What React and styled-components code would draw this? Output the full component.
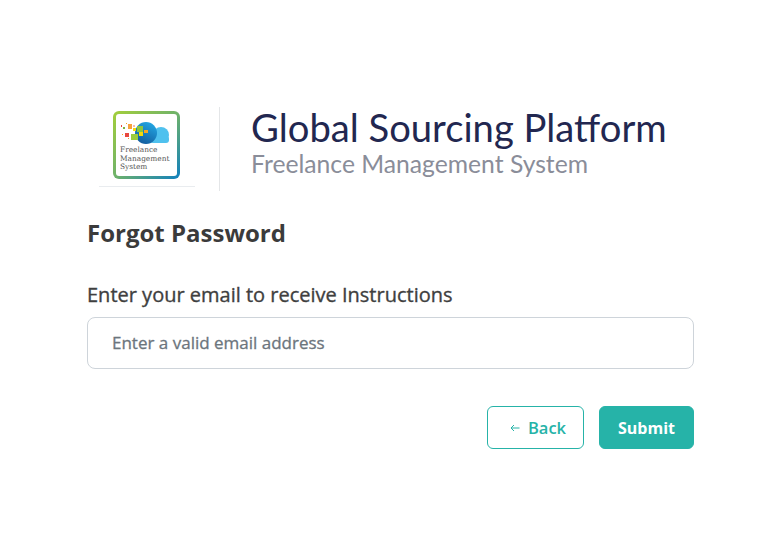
import React from "react";
import styled, { createGlobalStyle } from "styled-components";

const Global = createGlobalStyle`
  html, body { margin: 0; padding: 0; background: #fff; }
  body { font-family: "Open Sans", "Liberation Sans", sans-serif; }
`;
const Page = styled.main`
  width: 607px;
  margin-left: 87px;
  padding-top: 107px;
  box-sizing: border-box;
`;
const Header = styled.header`
  display: flex;
  align-items: flex-start;
  height: 85px;
`;
const LogoCell = styled.div`
  width: 133px;
  height: 84px;
  box-sizing: border-box;
  border-right: 1px solid #e4e6e8;
  padding-left: 12px;
`;
const LogoFrame = styled.div`
  width: 96px;
  height: 80px;
  box-sizing: border-box;
  border-bottom: 1px solid #e9ecef;
  padding: 4px 0 0 14px;
`;
const LogoBadge = styled.div`
  width: 67px;
  height: 68px;
  box-sizing: border-box;
  border-radius: 6px;
  border: 3px solid transparent;
  background: linear-gradient(#fff, #fff) padding-box,
    linear-gradient(135deg, #a4cf3a 0%, #6fb26a 50%, #0f7fc0 100%) border-box;
  display: flex;
  flex-direction: column;
  padding: 6px 0 0 4px;
`;
const LogoArt = styled.svg`
  display: block;
  flex: none;
  width: 52px;
  height: 26px;
`;
const LogoText = styled.div`
  font-family: "DejaVu Serif", serif;
  font-size: 7.4px;
  line-height: 8.5px;
  color: #555;
  white-space: nowrap;
`;
const Titles = styled.div`
  padding: 0 0 0 31px;
`;
const Title = styled.h1`
  margin: 0;
  font-family: "Lato", "Noto Sans", sans-serif;
  font-weight: 400;
  font-size: 38.2px;
  line-height: 41px;
  color: #222750;
  white-space: nowrap;
`;
const Subtitle = styled.h2`
  margin: 1px 0 0;
  font-family: "Lato", "Noto Sans", sans-serif;
  font-weight: 400;
  font-size: 24.7px;
  line-height: 30px;
  color: #8a8d99;
  white-space: nowrap;
`;
const Heading = styled.h3`
  margin: 23px 0 0;
  font-size: 24px;
  line-height: 36px;
  font-weight: 700;
  color: #3b3b3b;
`;
const Form = styled.form`
  margin-top: 31px;
  display: flex;
  flex-direction: column;
`;
const Label = styled.label`
  font-size: 20px;
  line-height: 26px;
  font-weight: 400;
  -webkit-text-stroke: 0.35px #3f3f3f;
  color: #3f3f3f;
  white-space: nowrap;
`;
const Input = styled.input`
  margin-top: 9px;
  height: 52px;
  box-sizing: border-box;
  border: 1px solid #ced4da;
  border-radius: 8px;
  padding: 0 24px 2px;
  font-family: inherit;
  font-size: 17px;
  font-weight: 400;
  outline: none;
  &::placeholder {
    color: #6c757d;
    opacity: 1;
    -webkit-text-stroke: 0.3px #6c757d;
  }
`;
const Actions = styled.div`
  display: flex;
  justify-content: flex-end;
  gap: 15px;
  margin-top: 37px;
`;
const Button = styled.button`
  height: 43px;
  box-sizing: border-box;
  border-radius: 6px;
  border: 1px solid #26b3a8;
  background: ${(p) => (p.$primary ? "#26b3a8" : "#fff")};
  color: ${(p) => (p.$primary ? "#fff" : "#26b3a8")};
  width: ${(p) => p.$w}px;
  font-family: inherit;
  font-size: ${(p) => (p.$primary ? 16 : 16.5)}px;
  font-weight: ${(p) => (p.$primary ? 700 : 600)};
  display: flex;
  align-items: center;
  justify-content: center;
  gap: 8px;
  padding: 0 0 0 ${(p) => (p.$primary ? 0 : 5)}px;
`;

function Art() {
  return (
    <LogoArt viewBox="0 0 52 26">
      <defs>
        <linearGradient id="cloudDark" x1="0.2" y1="1" x2="0.7" y2="0">
          <stop offset="0" stopColor="#12589a" />
          <stop offset="1" stopColor="#22a6e2" />
        </linearGradient>
      </defs>
      <circle cx="41" cy="15" r="8" fill="#4fc1ee" />
      <rect x="30" y="16" width="19" height="7" rx="3" fill="#4fc1ee" />
      <circle cx="26" cy="13" r="11" fill="url(#cloudDark)" />
      <rect x="17" y="6" width="6" height="6" fill="#8cc63f" />
      <rect x="11" y="14" width="7" height="6" fill="#9ccc3c" />
      <rect x="19" y="12" width="4" height="4" fill="#f5d90a" />
      <rect x="24" y="10" width="4" height="3" fill="#f5a623" />
      <rect x="8" y="4" width="4" height="5" fill="#f7a13c" />
      <rect x="13" y="8" width="3" height="3" fill="#f5d90a" />
      <rect x="5" y="13" width="4" height="4" fill="#e8483f" />
      <rect x="3" y="7" width="2" height="2" fill="#7cb342" />
      <rect x="13" y="5" width="2" height="2" fill="#f4b8b0" />
      <rect x="1" y="5" width="1" height="2" fill="#e8483f" />
      <rect x="6" y="3" width="1" height="1" fill="#f5a623" />
      <rect x="2" y="14" width="1" height="1" fill="#f5a623" />
      <rect x="8" y="18" width="1" height="1" fill="#f5a623" />
    </LogoArt>
  );
}

function BackArrow() {
  return (
    <svg width="10" height="10" viewBox="0 0 10 10" fill="none" stroke="#26b3a8" strokeWidth="1">
      <path d="M9.500 5H1M4 2L1 5l3 3" />
    </svg>
  );
}

export default function App() {
  return (
    <>
      <Global />
      <Page>
        <Header>
          <LogoCell>
            <LogoFrame>
              <LogoBadge>
                <Art />
                <LogoText>Freelance<br />Management<br />System</LogoText>
              </LogoBadge>
            </LogoFrame>
          </LogoCell>
          <Titles>
            <Title>Global Sourcing Platform</Title>
            <Subtitle>Freelance Management System</Subtitle>
          </Titles>
        </Header>
        <Heading>Forgot Password</Heading>
        <Form onSubmit={(e) => e.preventDefault()}>
          <Label htmlFor="email">Enter your email to receive Instructions</Label>
          <Input id="email" placeholder="Enter a valid email address" />
          <Actions>
            <Button type="button" $w={97}><BackArrow />Back</Button>
            <Button type="submit" $primary $w={95}>Submit</Button>
          </Actions>
        </Form>
      </Page>
    </>
  );
}
